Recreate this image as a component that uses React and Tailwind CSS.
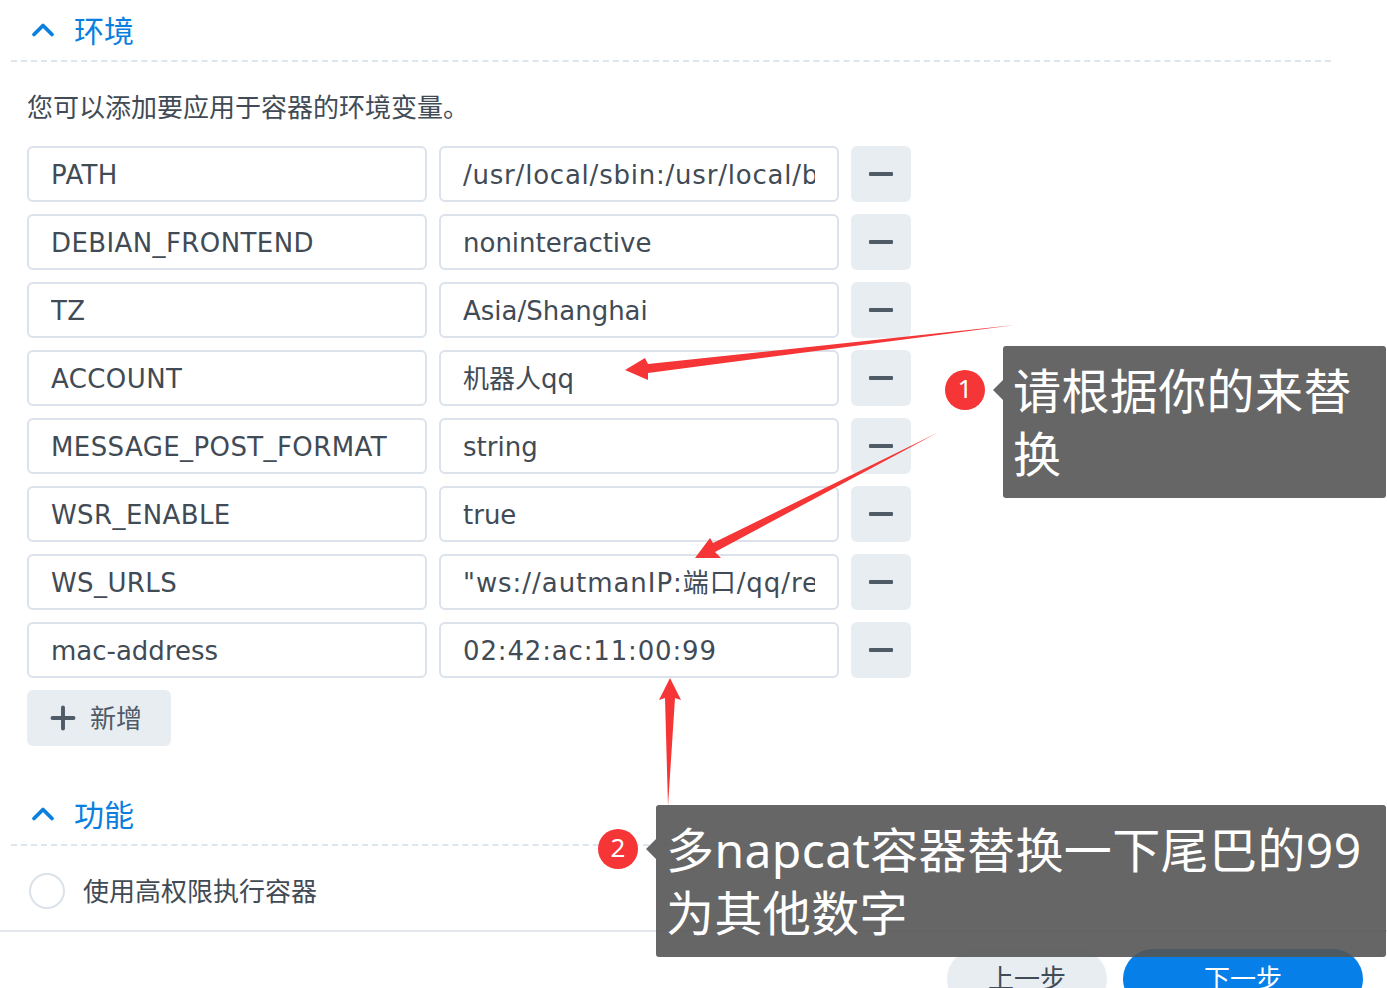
import { ChevronUp, Plus } from "lucide-react"

// value rows with a lot of punctuation or digits sit wider in the reference
const rows = [
  { name: "PATH", value: "/usr/local/sbin:/usr/local/bin:/usr/sbin:/usr/bin", spacing: "tracking-[0.78px]" },
  { name: "DEBIAN_FRONTEND", value: "noninteractive" },
  { name: "TZ", value: "Asia/Shanghai" },
  { name: "ACCOUNT", value: "机器人qq" },
  { name: "MESSAGE_POST_FORMAT", value: "string" },
  { name: "WSR_ENABLE", value: "true" },
  { name: "WS_URLS", value: "\"ws://autmanIP:端口/qq/reverse/ws\"", spacing: "tracking-[0.95px]" },
  { name: "mac-address", value: "02:42:ac:11:00:99", spacing: "tracking-[0.85px]" },
]

function Field({ className = "", children }) {
  return (
    <div className={`h-14 w-[400px] rounded-[6px] border-2 border-[#dbe2ea] bg-white px-[22px] leading-[54px] ${className}`}>
      <div className="overflow-hidden whitespace-nowrap">{children}</div>
    </div>
  )
}

function SectionTitle({ children }) {
  return (
    <div className="ml-[11px] mr-[56px] flex h-[62px] items-center border-b-2 border-dashed border-[#dbe6ee] pl-[18px] text-[30px] text-[#0a7fdf]">
      <ChevronUp size={36} strokeWidth={2.5} className="-ml-[4px] mr-[13px]" />
      <span className="mt-[2px]">{children}</span>
    </div>
  )
}

function Note({ number, className, children }) {
  return (
    <div className={`absolute font-['Noto_Sans','Noto_Sans_CJK_SC',sans-serif] ${className}`}>
      <div className="absolute -left-[58px] top-6 flex h-10 w-10 items-center justify-center rounded-full bg-[#f53536] pb-1 text-[26px] leading-none text-white">{number}</div>
      <div className="absolute -left-[10px] top-[34px] h-0 w-0 border-y-[10px] border-r-[10px] border-y-transparent border-r-[#555]/90" />
      <div className="h-[152px] rounded-[3px] bg-[#555]/90 py-[13px] pl-[10px] pr-3 text-[48px] leading-[63px] tracking-[0.4px] text-white">{children}</div>
    </div>
  )
}

export default function App() {
  return (
    <div className="relative h-[988px] overflow-hidden bg-white font-['DejaVu_Sans','Noto_Sans_CJK_SC',sans-serif] text-[26px] text-[#414b55]">
      <SectionTitle>环境</SectionTitle>
      <div className="px-[27px]">
        <p className="mt-7 h-9 leading-9">您可以添加要应用于容器的环境变量。</p>
        <div className="mt-5 flex flex-col gap-3">
          {rows.map(({ name, value, spacing = "" }) => (
            <div key={name} className="flex gap-3">
              <Field className={name === "mac-address" ? "" : "tracking-[0.4px]"}>{name}</Field>
              <Field className={spacing}>{value}</Field>
              <button className="flex h-14 w-[60px] items-center justify-center rounded-[6px] bg-[#e8edf2]">
                <span className="h-1 w-6 rounded-[1px] bg-[#4f5b67]" />
              </button>
            </div>
          ))}
        </div>
        <button className="mt-3 flex h-14 w-36 items-center rounded-[6px] bg-[#e8edf2] pl-[18px] text-[#4f5b67]">
          <Plus size={36} strokeWidth={2.6} />
          <span className="ml-[9px] mt-[2px]">新增</span>
        </button>
      </div>

      <div className="mt-[38px]">
        <SectionTitle>功能</SectionTitle>
      </div>
      <label className="ml-[29px] mt-[27px] flex h-9 items-center">
        <span className="h-9 w-9 rounded-full border-2 border-[#dbe2ea] bg-white" />
        <span className="ml-[18px] mt-[2px]">使用高权限执行容器</span>
      </label>

      <div className="mt-[21px] flex h-[80px] justify-end gap-4 border-t-2 border-[#e4e8ee] pr-6 pt-[17px]">
        <button className="h-[60px] w-40 rounded-full bg-[#e8edf2] leading-[60px]">上一步</button>
        <button className="h-[60px] w-60 rounded-full bg-[#0680e8] leading-[60px] text-white">下一步</button>
      </div>

      <svg className="pointer-events-none absolute left-0 top-0" width="1387" height="988" viewBox="0 0 1387 988">
        <polygon fill="#f53536" points="1015,325 648,364 645,358 625,370 648,380 648,373" />
        <polygon fill="#f53536" points="937,433 713,543 710,538 695,558 721,558 715,552" />
        <polygon fill="#f53536" points="668,806 665,698 659,700 670,678 681,700 675,698" />
      </svg>

      <Note number="1" className="left-[1003px] top-[346px] w-[383px]">请根据你的来替换</Note>
      <Note number="2" className="left-[656px] top-[805px] w-[730px]">多napcat容器替换一下尾巴的99为其他数字</Note>
    </div>
  )
}
